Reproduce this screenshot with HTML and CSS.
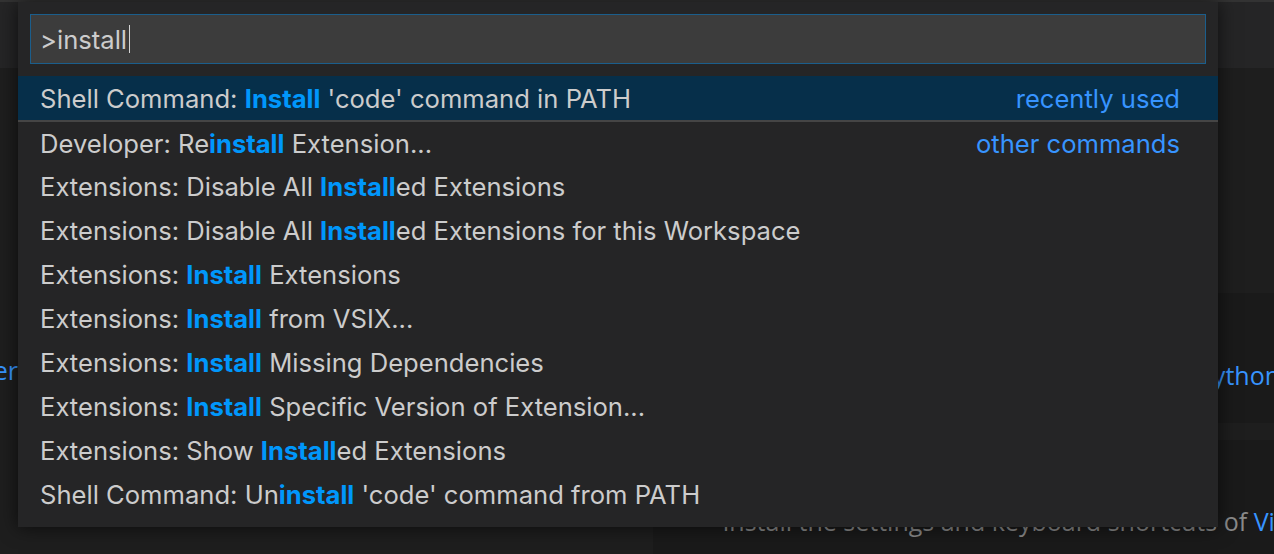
FILE: index.html
```html
<!DOCTYPE html>
<html lang="en">
<head>
    <meta charset="UTF-8">
    <title>Command Palette</title>
    <link rel="stylesheet" href="styles.css">
</head>
<body>
    <div class="workbench">
        <div class="tabs"></div>
        <div class="editor">
            <div class="welcome-left">
                <div class="box-left">
                    <p class="line">Tools and languages <span class="link">Docker</span></p>
                </div>
            </div>
            <div class="welcome-right">
                <div class="box box-top">
                    <p class="line">Install support for <span class="link">JavaScript, Python</span></p>
                </div>
                <div class="box box-low">
                    <p class="line">Install the settings and keyboard shortcuts of <span class="link">Vim</span></p>
                </div>
            </div>
        </div>
    </div>

    <!-- quick open widget, over the welcome page -->
    <div class="quick-open">
        <div class="input-box">
            <span class="input-text">&gt;install</span><span class="caret"></span>
        </div>
        <ul class="list">
            <li class="row selected">
                <span class="label">Shell Command: <b>Install</b> 'code' command in PATH</span>
                <span class="group">recently used</span>
            </li>
            <li class="row separator">
                <span class="label">Developer: Re<b>install</b> Extension...</span>
                <span class="group">other commands</span>
            </li>
            <li class="row"><span class="label">Extensions: Disable All <b>Install</b>ed Extensions</span></li>
            <li class="row"><span class="label">Extensions: Disable All <b>Install</b>ed Extensions for this Workspace</span></li>
            <li class="row"><span class="label">Extensions: <b>Install</b> Extensions</span></li>
            <li class="row"><span class="label">Extensions: <b>Install</b> from VSIX...</span></li>
            <li class="row"><span class="label">Extensions: <b>Install</b> Missing Dependencies</span></li>
            <li class="row"><span class="label">Extensions: <b>Install</b> Specific Version of Extension...</span></li>
            <li class="row"><span class="label">Extensions: Show <b>Install</b>ed Extensions</span></li>
            <li class="row"><span class="label">Shell Command: Un<b>install</b> 'code' command from PATH</span></li>
        </ul>
    </div>
</body>
</html>
```

FILE: styles.css
```css
/* Base */
body {
    margin: 0;
    padding: 0;
    background-color: #1e1e1e;
    font-family: 'Inter', 'Noto Sans', sans-serif;
    color: #cccccc;
    overflow: hidden;
}

/* Workbench behind the palette */
.workbench {
    height: 554px;
    display: flex;
    flex-direction: column;
}

.tabs {
    height: 66px;
    background-color: #252526;
    border-top: 2px solid #333333;
}

.editor {
    flex: 1;
    display: flex;
    background-color: #1e1e1e;
}

.welcome-left {
    width: 653px;
    padding-top: 262px;
    box-sizing: border-box;
    display: flex;
    flex-direction: column;
    justify-content: space-between;
}

.box-left {
    height: 80px;
    width: 18px;
    display: flex;
    align-items: center;
    justify-content: flex-end;
    overflow: hidden;
}

.welcome-right {
    flex: 1;
    padding-top: 225px;
    display: flex;
    flex-direction: column;
    gap: 17px;
    min-width: 0;
}

.box {
    background-color: #1a1a1a;
    display: flex;
    justify-content: flex-end;
    white-space: nowrap;
    overflow: hidden;
}

.box-top {
    height: 130px;
    align-items: center;
}

.box-top .line {
    margin-top: 34px;
    margin-right: -6px;
}

.box-low {
    flex: 1;
    align-items: flex-end;
    padding-bottom: 16px;
}

.box-low .line {
    margin-right: -24px;
}

.line {
    margin: 0;
    font-family: 'Open Sans', 'Noto Sans', sans-serif;
    font-size: 25px;
    color: #8a8a8a;
    white-space: nowrap;
    flex-shrink: 0;
}

.link {
    color: #3794ff;
}

/* Quick open */
.quick-open {
    position: absolute;
    left: 18px;
    top: 2px;
    width: 1200px;
    background-color: #252526;
    box-shadow: 0 0 18px rgba(0, 0, 0, 0.65);
    padding: 12px 0 11px;
}

.input-box {
    margin: 0 12px 12px;
    height: 48px;
    background-color: #3c3c3c;
    border: 1px solid #1b5e8c;
    display: flex;
    align-items: center;
    padding-left: 9px;
}

.input-text {
    font-size: 25.6px;
    color: #cccccc;
}

.caret {
    width: 1px;
    height: 28px;
    margin-left: 2px;
    background-color: #d4d4d4;
}

.list {
    list-style: none;
    margin: 0;
    padding: 0;
}

.row {
    height: 44px;
    display: flex;
    align-items: center;
    justify-content: space-between;
    padding: 0 38px 0 22px;
    font-size: 25.6px;
    white-space: nowrap;
}

.row b {
    color: #0097fb;
    font-weight: 700;
}

.row.selected {
    background-color: #062f4a;
}

.row.separator {
    height: 42px;
    border-top: 2px solid #454545;
}

.group {
    color: #3794ff;
}
```
